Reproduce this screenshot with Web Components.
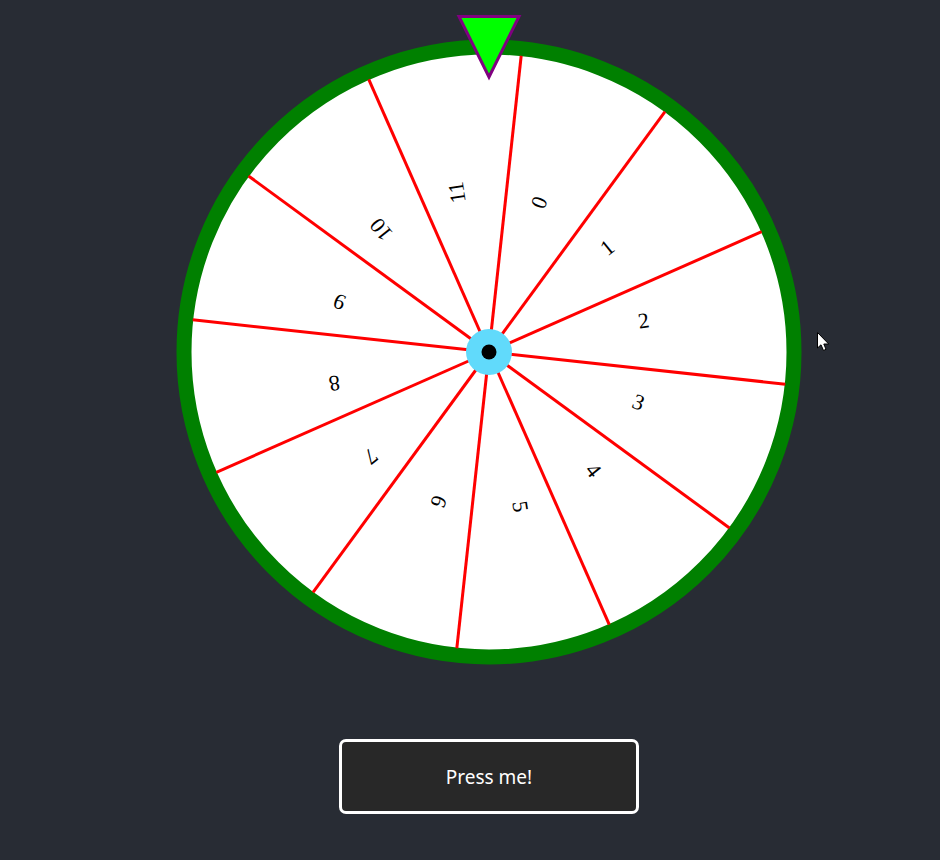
<!DOCTYPE html>
<html lang="en">
<head>
  <meta charset="utf-8">
  <meta name="viewport" content="width=device-width, initial-scale=1">
  <title>Wheel</title>
  <style>
    body {
      margin: 0;
      background: #282c34;
    }
  </style>
</head>
<body>
  <wheel-app>
    <spin-wheel sectors="12"></spin-wheel>
    <press-button>Press me!</press-button>
    <mouse-pointer slot="overlay"></mouse-pointer>
  </wheel-app>

  <script>
    class WheelApp extends HTMLElement {
      constructor() {
        super();
        this.attachShadow({ mode: 'open' });
        this.shadowRoot.innerHTML = `
          <style>
            :host {
              display: block;
              position: relative;
              min-height: 100vh;
              box-sizing: border-box;
              padding: 14px 0 46px 38px;
            }
            main {
              display: flex;
              flex-direction: column;
              align-items: center;
              gap: 73px;
            }
          </style>
          <main><slot></slot></main>
          <slot name="overlay"></slot>
        `;
      }
    }

    class SpinWheel extends HTMLElement {
      constructor() {
        super();
        this.attachShadow({ mode: 'open' });
        this.rotation = 0;
      }

      connectedCallback() {
        const count = Number(this.getAttribute('sectors')) || 12;
        const step = 360 / count;
        const start = -83.8;
        let lines = '';
        let labels = '';

        for (let i = 0; i < count; i++) {
          const angle = start + i * step;
          lines += `<line x2="298" transform="rotate(${angle})" />`;
          labels += `<text x="152" transform="rotate(${angle + step / 2})">${i}</text>`;
        }

        this.shadowRoot.innerHTML = `
          <style>
            :host {
              display: block;
              width: 100%;
              max-width: 626px;
            }
            svg {
              display: block;
              width: 100%;
              height: auto;
            }
            .disc {
              transition: transform 3s ease-out;
            }
            .rim {
              fill: white;
              stroke: green;
              stroke-width: 15;
            }
            line {
              stroke: red;
              stroke-width: 3;
            }
            text {
              font-family: "Liberation Serif", "Times New Roman", serif;
              font-size: 22px;
              fill: black;
            }
            .hub {
              fill: #61dafb;
            }
            .arrow {
              fill: lime;
              stroke: purple;
              stroke-width: 3;
            }
          </style>
          <svg viewBox="-313 -338 626 652" role="img" aria-label="Wheel">
            <g class="disc">
              <circle class="rim" r="305" />
              ${lines}
              ${labels}
              <circle class="hub" r="23" />
              <circle r="7.5" />
            </g>
            <path class="arrow" d="M-30 -335.5H30L0 -275Z" />
          </svg>
        `;
      }

      spin() {
        this.rotation += 720 + Math.floor(Math.random() * 360);
        this.shadowRoot.querySelector('.disc').style.transform = `rotate(${this.rotation}deg)`;
      }
    }

    class PressButton extends HTMLElement {
      constructor() {
        super();
        this.attachShadow({ mode: 'open' });
        this.shadowRoot.innerHTML = `
          <style>
            :host {
              display: block;
              width: 100%;
              max-width: 300px;
            }
            button {
              display: block;
              width: 100%;
              padding: 21px 20px 19px;
              border: 3px solid white;
              border-radius: 7px;
              background: #282828;
              color: white;
              font-family: "Noto Sans", "Open Sans", sans-serif;
              font-size: 19px;
              line-height: 29px;
              cursor: pointer;
            }
            button:hover {
              background: #333;
            }
          </style>
          <button type="button"><slot></slot></button>
        `;
      }

      connectedCallback() {
        this.shadowRoot.querySelector('button').addEventListener('click', () => {
          document.querySelector('spin-wheel').spin();
        });
      }
    }

    class MousePointer extends HTMLElement {
      constructor() {
        super();
        this.attachShadow({ mode: 'open' });
        this.shadowRoot.innerHTML = `
          <style>
            :host {
              position: absolute;
              top: 332px;
              left: 817px;
              pointer-events: none;
            }
            svg {
              display: block;
            }
          </style>
          <svg width="13" height="20" viewBox="0 0 13 20" aria-hidden="true">
            <path d="M.5 .5V16L4 12.8L6.5 18.5L9 17.3L6.8 12H11.7Z" fill="white" stroke="black" />
          </svg>
        `;
      }
    }

    customElements.define('wheel-app', WheelApp);
    customElements.define('spin-wheel', SpinWheel);
    customElements.define('press-button', PressButton);
    customElements.define('mouse-pointer', MousePointer);
  </script>
</body>
</html>
